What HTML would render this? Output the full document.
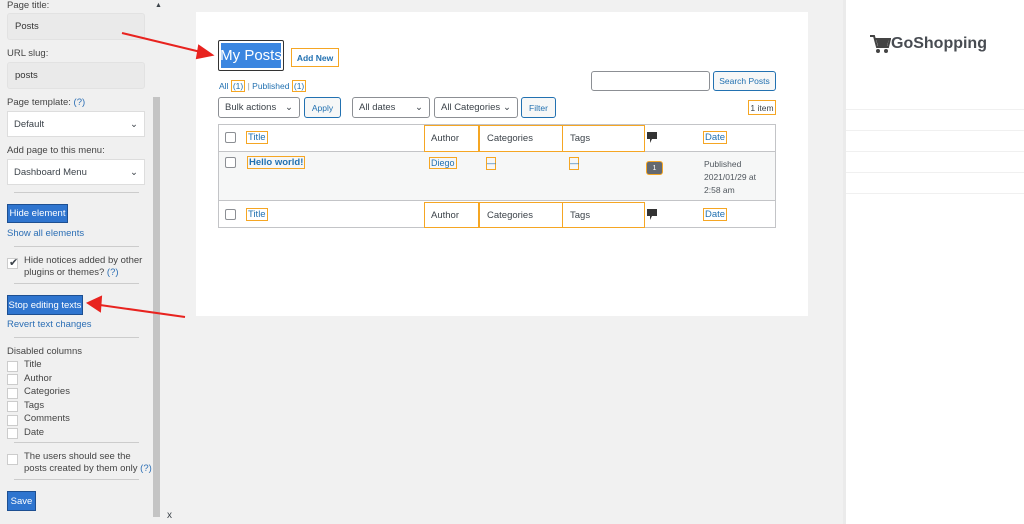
<!DOCTYPE html><html><head><style>
*{box-sizing:border-box;margin:0;padding:0}
body{width:1024px;height:524px;background:#f1f1f1;font-family:"Liberation Sans",sans-serif;font-size:9px;color:#3c434a;position:relative;overflow:hidden}
.a{position:absolute;white-space:nowrap}
.lbl{font-size:9.5px;color:#444}
.inp{background:#eaeaea;border:1px solid #e2e2e2;border-radius:3px;padding:0 7px;font-size:9.5px;color:#333;display:flex;align-items:center}
.sel{background:#fff;border:1px solid #ddd;padding:0 6px;font-size:9.5px;display:flex;align-items:center;justify-content:space-between}
.btn{background:#2f75cf;color:#fff;border:1px solid #1d4f91;font-size:9.5px;display:flex;align-items:center;justify-content:center}
.hr{height:1px;background:#ccc}
.lnk{color:#2c6fb5}
.cb{width:11px;height:11px;background:#fff;border:1px solid #ccc}
.ob{border:1.5px solid #f5a623}
.wsel{background:#fff;border:1px solid #8c8f94;border-radius:3px;font-size:9.5px;display:flex;align-items:center;justify-content:space-between;padding:0 6px}
.wb{border:1px solid #2271b1;border-radius:3px;color:#2271b1;background:#f6f7f7;font-size:8.5px;display:flex;align-items:center;justify-content:center}
.th{font-size:9.5px;display:flex;align-items:center}
.wcb{width:11px;height:11px;border:1px solid #8c8f94;border-radius:2px;background:#fff}
</style></head><body>
<div class="a" style="left:0;top:0;width:160px;height:524px;background:#f0f0f0"></div>
<div class="a" style="left:153px;top:97px;width:7px;height:420px;background:#c4c4c4"></div>
<div class="a" style="left:155px;top:2px;font-size:7px">▲</div>
<div class="a lbl" style="left:7px;top:0">Page title:</div>
<div class="a inp" style="left:7px;top:13px;width:138px;height:27px">Posts</div>
<div class="a lbl" style="left:7px;top:48px">URL slug:</div>
<div class="a inp" style="left:7px;top:62px;width:138px;height:27px">posts</div>
<div class="a lbl" style="left:7px;top:97px">Page template: <span class="lnk">(?)</span></div>
<div class="a sel" style="left:7px;top:111px;width:138px;height:26px">Default<span>⌄</span></div>
<div class="a lbl" style="left:7px;top:145px">Add page to this menu:</div>
<div class="a sel" style="left:7px;top:159px;width:138px;height:26px">Dashboard Menu<span>⌄</span></div>
<div class="a hr" style="left:14px;top:192px;width:125px"></div>
<div class="a btn" style="left:7px;top:204px;width:61px;height:19px">Hide element</div>
<div class="a lnk" style="left:7px;top:228px;font-size:9.5px">Show all elements</div>
<div class="a hr" style="left:14px;top:246px;width:125px"></div>
<div class="a cb" style="left:7px;top:258px"></div><div class="a" style="left:9px;top:256px;font-size:11px">✔</div>
<div class="a lbl" style="left:24px;top:255px;line-height:12px">Hide notices added by other<br>plugins or themes? <span class="lnk">(?)</span></div>
<div class="a hr" style="left:14px;top:283px;width:125px"></div>
<div class="a btn" style="left:7px;top:295px;width:76px;height:20px">Stop editing texts</div>
<div class="a lnk" style="left:7px;top:319px;font-size:9.5px">Revert text changes</div>
<div class="a hr" style="left:14px;top:337px;width:125px"></div>
<div class="a lbl" style="left:7px;top:346px">Disabled columns</div>
<div class="a lbl" style="left:24px;top:358px;line-height:13.5px">Title<br>Author<br>Categories<br>Tags<br>Comments<br>Date</div>
<div class="a cb" style="left:7px;top:361px"></div><div class="a cb" style="left:7px;top:374px"></div><div class="a cb" style="left:7px;top:388px"></div><div class="a cb" style="left:7px;top:401px"></div><div class="a cb" style="left:7px;top:415px"></div><div class="a cb" style="left:7px;top:428px"></div>
<div class="a hr" style="left:14px;top:442px;width:125px"></div>
<div class="a cb" style="left:7px;top:454px"></div>
<div class="a lbl" style="left:24px;top:451px;line-height:12px">The users should see the<br>posts created by them only <span class="lnk">(?)</span></div>
<div class="a hr" style="left:14px;top:479px;width:125px"></div>
<div class="a btn" style="left:7px;top:491px;width:29px;height:20px">Save</div>
<div class="a" style="left:167px;top:510px;font-size:10px">x</div>

<div class="a" style="left:196px;top:12px;width:612px;height:304px;background:#fff"></div>
<div class="a" style="left:218px;top:40px;width:66px;height:31px;border:1.5px solid #333;border-radius:2px;padding:2px"><div style="background:#3b86e0;color:#fff;font-size:15px;height:100%;display:flex;align-items:center;justify-content:center;white-space:nowrap;overflow:hidden">My Posts</div></div>
<div class="a ob" style="left:291px;top:48px;width:48px;height:19px;font-size:8.5px;font-weight:bold;color:#2271b1;display:flex;align-items:center;justify-content:center">Add New</div>
<div class="a" style="left:219px;top:81px;font-size:8.5px;color:#2271b1">All <span class="ob" style="padding:0 1px">(1)</span> <span style="color:#999">|</span> Published <span class="ob" style="padding:0 1px">(1)</span></div>
<div class="a" style="left:591px;top:71px;width:119px;height:20px;border:1px solid #8c8f94;border-radius:3px;background:#fff"></div>
<div class="a wb" style="left:713px;top:71px;width:63px;height:20px">Search Posts</div>
<div class="a wsel" style="left:218px;top:97px;width:82px;height:21px">Bulk actions<span>⌄</span></div>
<div class="a wb" style="left:304px;top:97px;width:37px;height:21px">Apply</div>
<div class="a wsel" style="left:352px;top:97px;width:78px;height:21px">All dates<span>⌄</span></div>
<div class="a wsel" style="left:434px;top:97px;width:84px;height:21px">All Categories<span>⌄</span></div>
<div class="a wb" style="left:521px;top:97px;width:35px;height:21px">Filter</div>
<div class="a ob" style="left:748px;top:100px;width:28px;height:15px;font-size:8.5px;display:flex;align-items:center;justify-content:center">1 item</div>

<div class="a" style="left:218px;top:124px;width:558px;height:104px;border:1px solid #c3c4c7;background:#fff"></div>
<div class="a" style="left:219px;top:151px;width:556px;height:50px;background:#f6f7f7;border-top:1px solid #c3c4c7;border-bottom:1px solid #c3c4c7"></div>
<div class="a wcb" style="left:225px;top:132px"></div><div class="a wcb" style="left:225px;top:157px"></div><div class="a wcb" style="left:225px;top:209px"></div>
<div class="a ob" style="left:246px;top:131px;font-size:9.5px;color:#2271b1;padding:0 1px">Title</div>
<div class="a ob" style="left:246px;top:208px;font-size:9.5px;color:#2271b1;padding:0 1px">Title</div>
<div class="a ob th" style="left:424px;top:125px;width:55px;height:27px;padding-left:6px">Author</div>
<div class="a ob th" style="left:479px;top:125px;width:84px;height:27px;padding-left:7px">Categories</div>
<div class="a ob th" style="left:562px;top:125px;width:83px;height:27px;padding-left:7px">Tags</div>
<div class="a ob th" style="left:424px;top:202px;width:55px;height:26px;padding-left:6px">Author</div>
<div class="a ob th" style="left:479px;top:202px;width:84px;height:26px;padding-left:7px">Categories</div>
<div class="a ob th" style="left:562px;top:202px;width:83px;height:26px;padding-left:7px">Tags</div>
<svg class="a" style="left:647px;top:132px" width="10" height="12" viewBox="0 0 10 12"><path d="M0 0h10v7H5l-2 4V7H0z" fill="#333"/></svg>
<svg class="a" style="left:647px;top:209px" width="10" height="12" viewBox="0 0 10 12"><path d="M0 0h10v7H5l-2 4V7H0z" fill="#333"/></svg>
<div class="a ob" style="left:703px;top:131px;font-size:9.5px;color:#2271b1;padding:0 1px">Date</div>
<div class="a ob" style="left:703px;top:208px;font-size:9.5px;color:#2271b1;padding:0 1px">Date</div>
<div class="a ob" style="left:247px;top:156px;font-size:9.5px;font-weight:bold;color:#2271b1;padding:0 1px">Hello world!</div>
<div class="a ob" style="left:429px;top:157px;font-size:9px;color:#2271b1;padding:0 1px">Diego</div>
<div class="a ob" style="left:486px;top:157px;width:10px;height:13px;font-size:9px;color:#2271b1;text-align:center">—</div>
<div class="a ob" style="left:569px;top:157px;width:10px;height:13px;font-size:9px;color:#2271b1;text-align:center">—</div>
<div class="a" style="left:646px;top:161px;width:17px;height:14px;background:#646970;border:1.5px solid #f5a623;border-radius:3px;color:#fff;font-size:7px;display:flex;align-items:center;justify-content:center">1</div>
<div class="a" style="left:704px;top:158px;font-size:8.5px;line-height:13px;color:#50575e">Published<br>2021/01/29 at<br>2:58 am</div>

<div class="a" style="left:843px;top:0;width:181px;height:524px;background:#fff;border-left:3px solid #ebebeb"></div>
<svg class="a" style="left:869px;top:34px" width="22" height="20" viewBox="0 0 22 20"><path d="M1 2h4l3 11h11l2-8H6" fill="none" stroke="#444" stroke-width="2"/><path d="M7 5h13l-2 7H9z" fill="#444"/><circle cx="9" cy="17" r="2" fill="#444"/><circle cx="17" cy="17" r="2" fill="#444"/></svg>
<div class="a" style="left:891px;top:35px;font-size:16px;font-weight:bold;color:#484c52">GoShopping</div>
<div class="a" style="left:846px;top:109px;width:178px;height:1px;background:#f0f0f0"></div>
<div class="a" style="left:846px;top:130px;width:178px;height:1px;background:#f0f0f0"></div>
<div class="a" style="left:846px;top:151px;width:178px;height:1px;background:#f0f0f0"></div>
<div class="a" style="left:846px;top:172px;width:178px;height:1px;background:#f0f0f0"></div>
<div class="a" style="left:846px;top:193px;width:178px;height:1px;background:#f0f0f0"></div>

<svg class="a" style="left:0;top:0" width="240" height="330"><g stroke="#e8231f" stroke-width="2" fill="#e8231f"><line x1="122" y1="33" x2="205" y2="53"/><polygon points="212,55 199,46 197,58"/><line x1="185" y1="317" x2="100" y2="305"/><polygon points="88,303 101,297 100,311"/></g></svg>
</body></html>
